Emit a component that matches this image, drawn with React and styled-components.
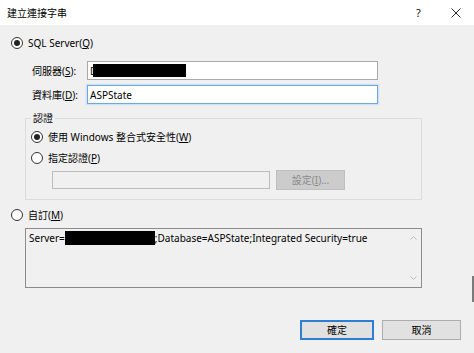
import React from "react";
import styled, { createGlobalStyle } from "styled-components";

const Global = createGlobalStyle`
  html, body { margin: 0; padding: 0; background: #f0f0f0; overflow: hidden; }
  #root { width: 474px; height: 353px; }
`;

const Window = styled.div`
  position: relative;
  width: 474px;
  height: 353px;
  display: flex;
  flex-direction: column;
  background: #f0f0f0;
  overflow: hidden;
  font-family: "Noto Sans", "Noto Sans CJK TC", sans-serif;
  font-size: 10px;
  color: #000;
`;

const TitleBar = styled.div`
  height: 25px;
  flex: none;
  display: flex;
  align-items: center;
  background: #fff;
  padding-left: 7px;
`;

const Title = styled.div`
  flex: 1;
  font-size: 10px;
  line-height: 14px;
`;

const TitleButton = styled.div`
  width: 37px;
  height: 25px;
  display: flex;
  align-items: center;
  justify-content: center;
  font-size: 11px;
  color: #111;
`;

const Content = styled.div`
  flex: 1;
  display: flex;
  flex-direction: column;
  padding: 10px 13px 0 11px;
`;

const RadioRow = styled.div`
  display: flex;
  align-items: center;
  height: 16px;
  gap: 5px;
  margin-top: ${(p) => p.$mt || 0}px;
  line-height: 14px;
  white-space: nowrap;
`;

const RadioCircle = styled.span`
  width: 12px;
  height: 12px;
  box-sizing: border-box;
  border: 1px solid #333;
  border-radius: 50%;
  background: #fff;
  display: flex;
  align-items: center;
  justify-content: center;
  flex: none;
  &::after {
    content: "";
    width: 6px;
    height: 6px;
    border-radius: 50%;
    background: #222;
    display: ${(p) => (p.$checked ? "block" : "none")};
  }
`;

const U = styled.span`
  text-decoration: underline;
  text-underline-offset: 1px;
`;

const FieldGrid = styled.div`
  margin: 10px 83px 0 21px;
  display: grid;
  grid-template-columns: 55px 1fr;
  row-gap: 5px;
  align-items: center;
`;

const Label = styled.span`
  line-height: 14px;
  white-space: nowrap;
`;

const TextInput = styled.div`
  height: 19px;
  box-sizing: border-box;
  border: 1px solid ${(p) => (p.$focused ? "#6fa9e2" : "#a9a9a9")};
  background: #fff;
  display: flex;
  align-items: center;
  padding: 0 2px;
  line-height: 14px;
  white-space: nowrap;
  box-shadow: ${(p) => (p.$focused ? "0 0 1px 1px rgba(150,200,245,0.35)" : "none")};
`;

const Redact = styled.span`
  display: inline-block;
  background: #000;
  width: ${(p) => p.$w}px;
  height: ${(p) => p.$h}px;
  margin-left: ${(p) => p.$ml || 0}px;
  vertical-align: ${(p) => p.$va || 0}px;
`;

const GroupBox = styled.fieldset`
  margin: 7px 39px 0 14px;
  border: 1px solid #dcdcdc;
  padding: 4px 0 9px 5px;
  min-width: 0;
`;

const Legend = styled.legend`
  padding: 0 2px;
  line-height: 14px;
  font-size: 10px;
`;

const CredRow = styled.div`
  display: flex;
  align-items: center;
  margin-top: 4px;
  margin-left: 21px;
  gap: 6px;
`;

const DisabledInput = styled.div`
  width: 218px;
  height: 18px;
  box-sizing: border-box;
  border: 1px solid #bcbcbc;
  background: #f0f0f0;
`;

const Button = styled.div`
  width: ${(p) => p.$w}px;
  height: 20px;
  box-sizing: border-box;
  display: flex;
  align-items: center;
  justify-content: center;
  line-height: 14px;
  white-space: nowrap;
  background: ${(p) => (p.$disabled ? "#cccccc" : "#e1e1e1")};
  color: ${(p) => (p.$disabled ? "#8a8a8a" : "#000")};
  border: ${(p) =>
    p.$default ? "2px solid #2c7fd4" : p.$disabled ? "1px solid #bfbfbf" : "1px solid #adadad"};
`;

const TextArea = styled.div`
  margin: 5px 39px 0 14px;
  height: 60px;
  box-sizing: border-box;
  border: 1px solid #8c8c8c;
  background: #f0f0f0;
  display: flex;
`;

const AreaText = styled.div`
  flex: 1;
  padding: 2px 3px;
  line-height: 14px;
  white-space: nowrap;
  overflow: hidden;
`;

const ScrollCol = styled.div`
  width: 16px;
  flex: none;
  display: flex;
  flex-direction: column;
  justify-content: space-between;
  align-items: center;
  padding: 7px 0 7px;
`;

const ButtonRow = styled.div`
  margin-top: 32px;
  display: flex;
  justify-content: flex-end;
  gap: 8px;
`;

const EdgeBar = styled.div`
  position: absolute;
  right: 0;
  top: 276px;
  width: 2px;
  height: 26px;
  background: #7a7a7a;
`;

const Chevron = ({ up }) => (
  <svg width="7" height="4" viewBox="0 0 7 4">
    <polyline
      points={up ? "0.5,3.5 3.5,0.5 6.5,3.5" : "0.5,0.5 3.5,3.5 6.5,0.5"}
      fill="none"
      stroke="#bdbdbd"
      strokeWidth="1"
    />
  </svg>
);

export default function App() {
  return (
    <Window>
      <Global />
      <TitleBar>
        <Title>建立連接字串</Title>
        <TitleButton>?</TitleButton>
        <TitleButton>
          <svg width="10" height="10" viewBox="0 0 10 10">
            <path d="M0.5 0.5 L9.5 9.5 M9.5 0.5 L0.5 9.5" stroke="#222" strokeWidth="1" />
          </svg>
        </TitleButton>
      </TitleBar>
      <Content>
        <RadioRow>
          <RadioCircle $checked />
          <span>
            SQL Server(<U>Q</U>)
          </span>
        </RadioRow>
        <FieldGrid>
          <Label>
            伺服器(<U>S</U>):
          </Label>
          <TextInput>
            D<Redact $w={93} $h={13} $ml={-4} />
          </TextInput>
          <Label>
            資料庫(<U>D</U>):
          </Label>
          <TextInput $focused>ASPState</TextInput>
        </FieldGrid>
        <GroupBox>
          <Legend>認證</Legend>
          <RadioRow>
            <RadioCircle $checked />
            <span>
              使用 Windows 整合式安全性(<U>W</U>)
            </span>
          </RadioRow>
          <RadioRow $mt={5}>
            <RadioCircle />
            <span>
              指定認證(<U>P</U>)
            </span>
          </RadioRow>
          <CredRow>
            <DisabledInput />
            <Button $w={69} $disabled>
              設定(<U>I</U>)...
            </Button>
          </CredRow>
        </GroupBox>
        <RadioRow $mt={7}>
          <RadioCircle />
          <span>
            自訂(<U>M</U>)
          </span>
        </RadioRow>
        <TextArea>
          <AreaText>
            Server=
            <Redact $w={90} $h={14} $va={-3} />
            ;Database=ASPState;Integrated Security=true
          </AreaText>
          <ScrollCol>
            <Chevron up />
            <Chevron />
          </ScrollCol>
        </TextArea>
        <ButtonRow>
          <Button $w={74} $default>
            確定
          </Button>
          <Button $w={79}>取消</Button>
        </ButtonRow>
      </Content>
      <EdgeBar />
    </Window>
  );
}
